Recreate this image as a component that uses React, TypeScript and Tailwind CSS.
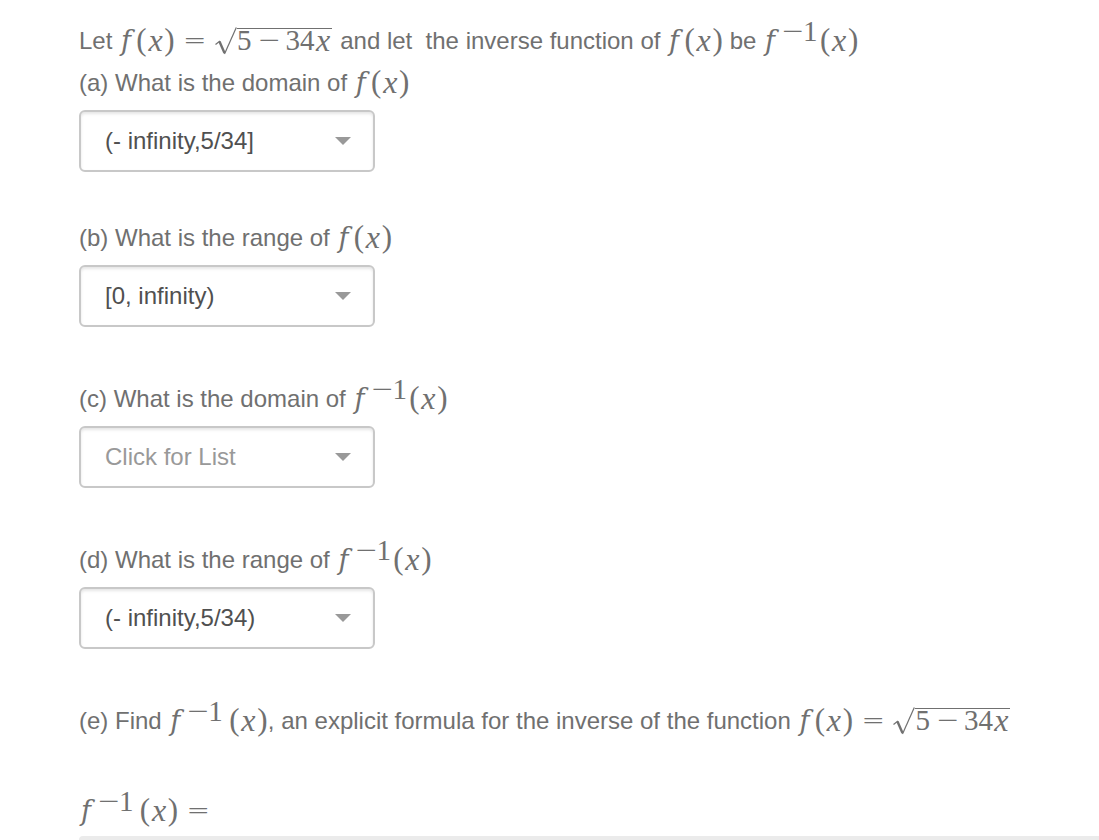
import type { ReactNode } from "react";

const glyph = "inline-block leading-[0] whitespace-nowrap";

function Paren({ children }: { children: string }) {
  return (
    <span className={`${glyph} w-[11px] text-center align-[-1px] font-['Liberation_Serif',serif] text-[31px]`}>
      {children}
    </span>
  );
}

function X() {
  return (
    <span className={`${glyph} w-[17px] text-center align-[-2px] font-['Liberation_Serif',serif] text-[32px] italic`}>
      x
    </span>
  );
}

function F() {
  return (
    <span className={`${glyph} w-[17px] pl-0.5 align-[-1px] font-['DejaVu_Serif',serif] text-[27px] italic`}>
      f
    </span>
  );
}

function Digits({ children }: { children: string }) {
  return (
    <span className={`${glyph} align-[-1px] font-['Liberation_Serif',serif] text-[29px]`}>{children}</span>
  );
}

function Sign({ children }: { children: string }) {
  return (
    <span className={`${glyph} w-[22px] text-center font-['DejaVu_Sans',sans-serif] text-[28px] font-extralight`}>
      {children}
    </span>
  );
}

function OfX() {
  return (
    <>
      <Paren>(</Paren>
      <X />
      <Paren>)</Paren>
    </>
  );
}

function Fx() {
  return (
    <span className="whitespace-nowrap">
      <F />
      <OfX />
    </span>
  );
}

function InverseFx({ spaced = false }: { spaced?: boolean }) {
  return (
    <span className="whitespace-nowrap">
      <F />
      <span className="ml-px inline-block align-[9px] leading-[0]">
        <Sign>−</Sign>
        <Digits>1</Digits>
      </span>
      <span className={spaced ? "ml-1.5" : "ml-0.5"}>
        <OfX />
      </span>
    </span>
  );
}

function Root() {
  return (
    <span className="mr-0.5 whitespace-nowrap">
      <svg
        className="inline-block h-7 w-6 align-[-6px]"
        viewBox="0 0 24 28"
        fill="none"
        stroke="currentColor"
        role="img"
        aria-label="square root of"
      >
        <path d="M2.5 17.5 L7 14" strokeWidth="1.2" />
        <path d="M6.5 14.5 L11.5 26" strokeWidth="2.4" />
        <path d="M11.5 27 L23.3 0.5" strokeWidth="1.2" />
      </svg>
      <span className="inline-block border-t border-current leading-6">
        <Digits>5</Digits>
        <span className="mx-1.5">
          <Sign>−</Sign>
        </span>
        <Digits>34</Digits>
        <X />
      </span>
    </span>
  );
}

function Equation() {
  return (
    <>
      <Fx />
      <span className="mx-2">
        <Sign>=</Sign>
      </span>
      <Root />
    </>
  );
}

const answers = ["Click for List", "(- infinity,5/34]", "(- infinity,5/34)", "[0, infinity)"];

function Question({ id, value, children }: { id: string; value: string; children: ReactNode }) {
  return (
    <div>
      <label htmlFor={id} className="block h-[42px] leading-[42px]">
        {children}
      </label>
      <div className="relative mt-1.5 h-[62px] w-[296px] max-w-full">
        <select
          id={id}
          defaultValue={value}
          className={`size-full appearance-none rounded-md border-2 border-[#c8c8c8] bg-white pr-12 pl-6 shadow-[inset_0_2px_3px_rgba(0,0,0,0.1)] ${
            value === answers[0] ? "text-[#999]" : "text-[#505050]"
          }`}
        >
          {answers.map((answer) => (
            <option key={answer}>{answer}</option>
          ))}
        </select>
        <svg
          className="pointer-events-none absolute top-[27px] right-6 h-2 w-4 text-[#999]"
          viewBox="0 0 16 8"
          fill="currentColor"
          aria-hidden="true"
        >
          <path d="M0 0h16L8 8z" />
        </svg>
      </div>
    </div>
  );
}

export default function App() {
  return (
    <main className="bg-white pt-5 pl-[79px] font-['Liberation_Sans',Arial,sans-serif] text-[24px] text-[#707070]">
      <p className="h-[42px] leading-[42px]">
        Let <Equation /> and let &nbsp;the inverse function of <Fx /> be <InverseFx />
      </p>
      <Question id="domain" value="(- infinity,5/34]">
        (a) What is the domain of <Fx />
      </Question>
      <div className="mt-[45px] flex flex-col gap-[51px]">
        <Question id="range" value="[0, infinity)">
          (b) What is the range of <Fx />
        </Question>
        <Question id="inverse-domain" value="Click for List">
          (c) What is the domain of <InverseFx />
        </Question>
        <Question id="inverse-range" value="(- infinity,5/34)">
          (d) What is the range of <InverseFx />
        </Question>
        <p className="h-[42px] leading-[42px]">
          (e) Find <InverseFx spaced />, an explicit formula for the inverse of the function <Equation />
        </p>
      </div>
      <p className="mt-12 h-[42px] leading-[42px]">
        <InverseFx spaced />
        <span className="ml-2">
          <Sign>=</Sign>
        </span>
      </p>
      <div className="mt-1 h-1 rounded-tl bg-[#ebebeb]" />
    </main>
  );
}
